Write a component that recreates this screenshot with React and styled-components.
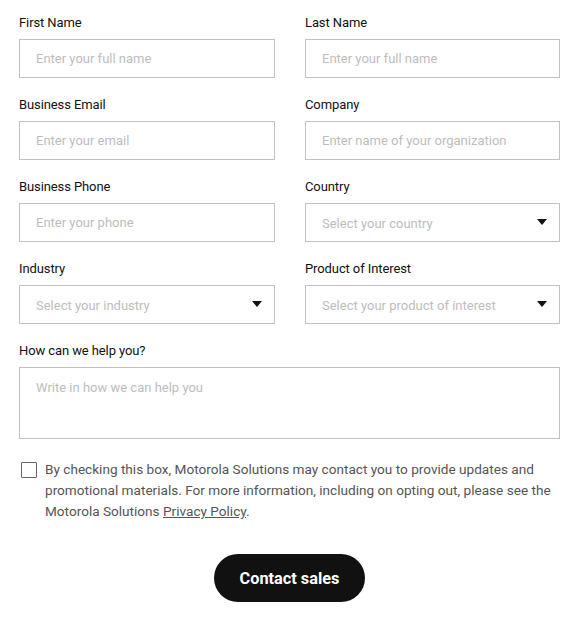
import React from 'react';
import styled, { createGlobalStyle } from 'styled-components';

const GlobalStyle = createGlobalStyle`
  body {
    margin: 0;
    background: #fff;
    font-family: Roboto, "Liberation Sans", sans-serif;
  }
  * { box-sizing: border-box; }
`;

const Form = styled.form`
  width: 580px;
  padding: 14px 20px 15px 19px;
  display: flex;
  flex-direction: column;
`;

const Grid = styled.div`
  display: grid;
  grid-template-columns: 256px 255px;
  column-gap: 30px;
  row-gap: 18px;
`;

const Field = styled.div`
  display: flex;
  flex-direction: column;
  grid-column: ${p => (p.$wide ? '1 / -1' : 'auto')};
`;

const Label = styled.label`
  font-size: 13px;
  line-height: 18px;
  letter-spacing: -0.1px;
  color: #111;
  margin-bottom: 7px;
`;

const Input = styled.input`
  height: 39px;
  border: 1px solid #c2c2c2;
  border-radius: 0;
  padding: 0 16px;
  font-family: inherit;
  font-size: 13px;
  color: #222;
  outline: none;
  &::placeholder { color: #bdbdbd; }
`;

const SelectWrap = styled.div`
  position: relative;
  height: 39px;
`;

const Select = styled.select`
  appearance: none;
  width: 100%;
  height: 100%;
  border: 1px solid #c2c2c2;
  border-radius: 0;
  background: #fff;
  padding: 2px 16px 0;
  font-family: inherit;
  font-size: 13px;
  color: #bdbdbd;
  outline: none;
`;

const Arrow = styled.span`
  position: absolute;
  right: 13px;
  top: 16px;
  width: 0;
  height: 0;
  border-left: 5px solid transparent;
  border-right: 5px solid transparent;
  border-top: 6px solid #111;
  pointer-events: none;
`;

const TextArea = styled.textarea`
  height: 72px;
  border: 1px solid #c2c2c2;
  border-radius: 0;
  padding: 12px 16px;
  resize: none;
  font-family: inherit;
  font-size: 13px;
  line-height: 16px;
  outline: none;
  &::placeholder { color: #bdbdbd; }
`;

const Consent = styled.label`
  display: flex;
  gap: 8px;
  margin-top: 20px;
  padding-left: 2px;
  font-size: 13.6px;
  line-height: 21px;
  color: #555;
`;

const Box = styled.span`
  flex: none;
  width: 16px;
  height: 16px;
  margin-top: 3px;
  border: 1.5px solid #666;
  border-radius: 1px;
`;

const Link = styled.a`
  color: #555;
  text-decoration: underline;
`;

const Button = styled.button`
  align-self: center;
  margin-top: 32px;
  height: 48px;
  padding: 0 26px;
  border: none;
  border-radius: 24px;
  background: #111;
  color: #fff;
  font-family: inherit;
  font-size: 16.3px;
  font-weight: 700;
`;

const TextField = ({ label, placeholder }) => (
  <Field>
    <Label>{label}</Label>
    <Input placeholder={placeholder} />
  </Field>
);

const SelectField = ({ label, placeholder }) => (
  <Field>
    <Label>{label}</Label>
    <SelectWrap>
      <Select defaultValue="">
        <option value="" disabled>{placeholder}</option>
      </Select>
      <Arrow />
    </SelectWrap>
  </Field>
);

export default function App() {
  return (
    <>
      <GlobalStyle />
      <Form onSubmit={e => e.preventDefault()}>
        <Grid>
          <TextField label="First Name" placeholder="Enter your full name" />
          <TextField label="Last Name" placeholder="Enter your full name" />
          <TextField label="Business Email" placeholder="Enter your email" />
          <TextField label="Company" placeholder="Enter name of your organization" />
          <TextField label="Business Phone" placeholder="Enter your phone" />
          <SelectField label="Country" placeholder="Select your country" />
          <SelectField label="Industry" placeholder="Select your industry" />
          <SelectField label="Product of Interest" placeholder="Select your product of interest" />
          <Field $wide>
            <Label>How can we help you?</Label>
            <TextArea placeholder="Write in how we can help you" />
          </Field>
        </Grid>
        <Consent>
          <Box />
          <span>
            By checking this box, Motorola Solutions may contact you to provide updates and
            promotional materials. For more information, including on opting out, please see the
            Motorola Solutions <Link href="#">Privacy Policy</Link>.
          </span>
        </Consent>
        <Button type="submit">Contact sales</Button>
      </Form>
    </>
  );
}
